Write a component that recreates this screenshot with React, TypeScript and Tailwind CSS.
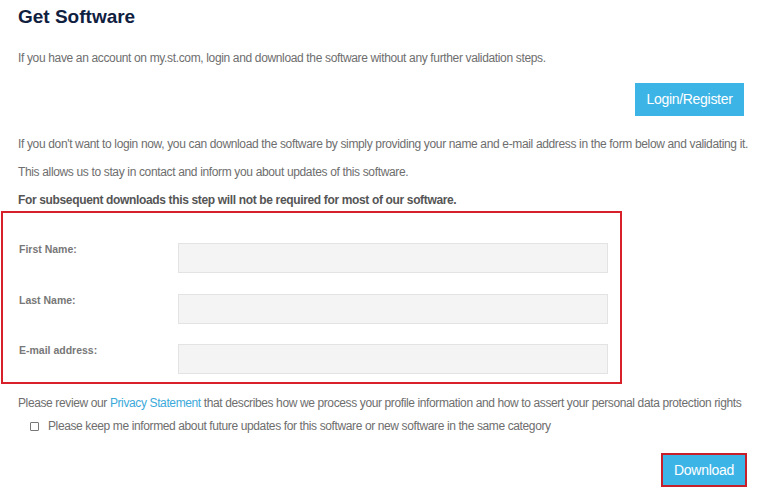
import React from "react";

const fields = ["First Name:", "Last Name:", "E-mail address:"];

const App = () => {
  return (
    <div className="w-[768px] h-[500px] bg-white overflow-hidden font-['Liberation_Sans',Arial,sans-serif] text-[#6e6e6e]">
      <div className="pl-[18px] pr-[20px] tracking-[-0.35px]">
        <h1 className="pt-[5px] text-[19px] leading-[24px] font-bold tracking-normal text-[#10203f]">Get Software</h1>
        <p className="mt-[21px] text-[12px] leading-[16px]">
          If you have an account on my.st.com, login and download the software without any further validation steps.
        </p>
        <div className="flex justify-end mt-[17px] pr-[4px]">
          <button className="w-[109px] h-[33px] bg-[#3db4e6] text-white text-[14px] tracking-[-0.3px]">Login/Register</button>
        </div>
        <p className="mt-[20px] text-[12px] leading-[16px] whitespace-nowrap">
          If you don't want to login now, you can download the software by simply providing your name and e-mail address in the form below and validating it.
        </p>
        <p className="mt-[12px] text-[12px] leading-[16px]">
          This allows us to stay in contact and inform you about updates of this software.
        </p>
        <p className="mt-[12px] text-[12px] leading-[16px] font-bold text-[#555]">
          For subsequent downloads this step will not be required for most of our software.
        </p>
      </div>

      <div className="ml-[1px] mt-[3px] w-[621px] h-[173px] border-2 border-[#d8202a] pl-[16px] pr-[12px] pt-[29px]">
        {fields.map((label, i) => (
          <div key={i} className="flex items-start h-[50.5px]">
            <label className="w-[159px] text-[10.5px] font-bold text-[#777] leading-[14px]">{label}</label>
            <input className="w-[431px] h-[30px] mt-[1px] bg-[#f4f4f4] border border-[#e3e3e3] outline-none" />
          </div>
        ))}
      </div>

      <div className="pl-[18px] pr-[20px] tracking-[-0.38px]">
        <p className="mt-[11px] text-[12px] leading-[16px] whitespace-nowrap">
          Please review our <a className="text-[#3ba9da]">Privacy Statement</a> that describes how we process your profile information and how to assert your personal data protection rights
        </p>
        <label className="flex items-center mt-[7px] ml-[12px] text-[12px] leading-[16px]">
          <span className="w-[9px] h-[9px] border border-[#777] rounded-[1px] mr-[9px]" />
          Please keep me informed about future updates for this software or new software in the same category
        </label>
        <div className="flex justify-end mt-[19px]">
          <button className="w-[86px] h-[34px] mr-[1px] bg-[#3db4e6] border-2 border-[#c8202a] text-white text-[14px] tracking-[-0.3px]">Download</button>
        </div>
      </div>
    </div>
  );
};

export default App;
